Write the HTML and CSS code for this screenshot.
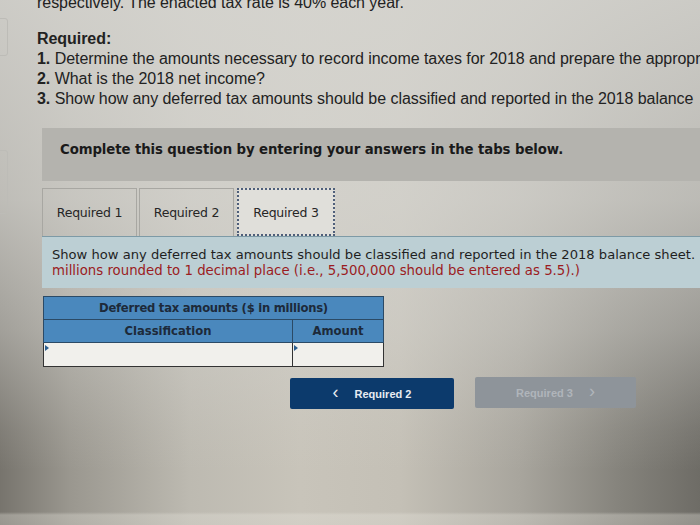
FILE: index.html
```html
<!DOCTYPE html>
<html>
<head>
<meta charset="utf-8">
<link rel="stylesheet" href="styles.css">
</head>
<body>
<div class="screen">
  <div class="edge edge-top"></div>
  <div class="edge edge-mid"></div>
  <div class="intro">
    <p class="cut">respectively. The enacted tax rate is 40% each year.</p>
    <p class="req-title">Required:</p>
    <p><b>1.</b> Determine the amounts necessary to record income taxes for 2018 and prepare the appropr</p>
    <p><b>2.</b> What is the 2018 net income?</p>
    <p><b>3.</b> Show how any deferred tax amounts should be classified and reported in the 2018 balance</p>
  </div>
  <div class="panel">
    <div class="complete">Complete this question by entering your answers in the tabs below.</div>
    <div class="tabs">
      <div class="tab">Required 1</div>
      <div class="tab">Required 2</div>
      <div class="tab active">Required 3</div>
    </div>
    <div class="info">
      <div>Show how any deferred tax amounts should be classified and reported in the 2018 balance sheet.</div>
      <div class="red">millions rounded to 1 decimal place (i.e., 5,500,000 should be entered as 5.5).)</div>
    </div>
    <table class="grid">
      <tr><th colspan="2" class="top">Deferred tax amounts ($ in millions)</th></tr>
      <tr><th class="c1">Classification</th><th class="c2">Amount</th></tr>
      <tr><td class="c1"><span class="mark"></span></td><td class="c2"><span class="mark"></span></td></tr>
    </table>
    <div class="nav">
      <div class="btn prev"><span class="chev">&lsaquo;</span>Required 2</div>
      <div class="btn next">Required 3<span class="chev">&rsaquo;</span></div>
    </div>
  </div>
</div>
</body>
</html>
```

FILE: styles.css
```css
html, body {
  margin: 0;
  padding: 0;
}
body {
  width: 700px;
  height: 525px;
  overflow: hidden;
  background: #d4d3ce;
}
.screen {
  position: relative;
  width: 700px;
  height: 525px;
  overflow: hidden;
  background:
    linear-gradient(to bottom, rgba(255,255,255,0) 0, rgba(255,255,255,0) 512px, rgba(230,228,220,0.35) 515px, rgba(230,228,220,0.3) 525px),
    linear-gradient(to bottom, rgba(214,213,208,0.9) 0, rgba(214,213,208,0.75) 200px, rgba(214,213,208,0.45) 330px, rgba(214,213,208,0.1) 430px, rgba(214,213,208,0) 470px),
    linear-gradient(to right, #77746d 0, #9a978f 70px, #bdbab1 190px, #c8c4ba 300px, #c4c0b6 400px, #a8a59d 520px, #85837c 620px, #6e6c66 700px);
  font-family: "Liberation Sans", Arial, sans-serif;
  color: #1f1f1f;
}
.edge {
  position: absolute;
  left: -4px;
  width: 10px;
  border: 1px solid #bdbcb7;
  border-radius: 3px;
}
.edge-top { top: 18px; height: 36px; }
.edge-mid { top: 150px; height: 62px; }

.intro {
  padding-left: 37px;
  margin-top: -7px;
  font-size: 16px;
  line-height: 20px;
  white-space: nowrap;
  color: #222;
  letter-spacing: -0.05px;
}
.intro p { margin: 0; }
.intro .cut { margin-bottom: 16px; }
.intro .req-title { font-weight: bold; }
.intro b { font-weight: bold; }

.panel {
  margin-left: 42px;
  margin-top: 19px;
  font-family: "DejaVu Sans", Verdana, sans-serif;
}
.complete {
  background: #b4b3ae;
  height: 53px;
  box-sizing: border-box;
  padding: 14px 0 0 18px;
  font-size: 13.3px;
  font-weight: bold;
  color: #1a1a1a;
  white-space: nowrap;
  letter-spacing: -0.1px;
}
.tabs {
  display: flex;
  gap: 2px;
  margin-top: 7px;
  height: 48px;
}
.tab {
  width: 95px;
  box-sizing: border-box;
  border: 1px solid #a8a7a2;
  border-bottom: none;
  display: flex;
  align-items: center;
  justify-content: center;
  font-size: 12.5px;
  color: #262626;
  letter-spacing: -0.2px;
}
.tab.active {
  width: 98px;
  margin-left: 1px;
  border: 2px dotted #4f5f7a;
  background: #e0dfda;
}
.info {
  background: #bccfd4;
  border-top: 1px solid #7d9aa6;
  height: 52px;
  box-sizing: border-box;
  padding: 10px 0 0 10px;
  font-size: 13.1px;
  line-height: 16px;
  color: #1f1f1f;
  white-space: nowrap;
  overflow: hidden;
}
.info .red { color: #9b1c22; font-size: 13.3px; }

.grid {
  margin-top: 8px;
  margin-left: 1px;
  border-collapse: collapse;
  width: 341px;
  font-size: 11.6px;
}
.grid th {
  background: #4a88bd;
  color: #1d2a3a;
  font-weight: bold;
  height: 22px;
  padding: 0;
  border: 1.5px solid #2b4a66;
  text-align: center;
}
.grid th.top { letter-spacing: -0.25px; font-size: 11.6px; }
.grid th.c1 { width: 248px; }
.grid td {
  background: #f1f0ec;
  height: 23px;
  padding: 0;
  border: 1.5px solid #333;
  position: relative;
}
.mark {
  position: absolute;
  left: 1px;
  top: 2px;
  width: 0; height: 0;
  border-top: 3px solid transparent;
  border-bottom: 3px solid transparent;
  border-left: 4px solid #2a5d8f;
}
.nav {
  display: flex;
  gap: 21px;
  margin-top: 11px;
  margin-left: 248px;
  font-family: "Liberation Sans", Arial, sans-serif;
}
.btn {
  width: 164px;
  height: 31px;
  border-radius: 2px;
  display: flex;
  align-items: center;
  justify-content: center;
  font-size: 11px;
  font-weight: bold;
}
.prev {
  background: #0c3a6c;
  color: #e8ecf2;
}
.prev .chev { margin-right: 16px; font-size: 18px; font-weight: normal; position: relative; top: -1px; }
.next {
  width: 161px;
  background: #8e949a;
  color: #b0b5ba;
  margin-top: -1px;
}
.next .chev { margin-left: 16px; font-size: 18px; font-weight: normal; position: relative; top: -1px; }
```
